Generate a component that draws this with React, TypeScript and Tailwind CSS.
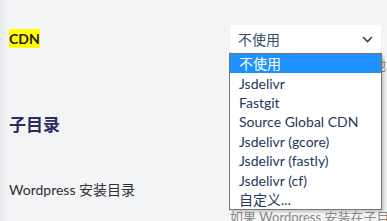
import React from 'react';

const font = { fontFamily: 'Lato, "Noto Sans CJK SC", sans-serif' };

const options = [
  '不使用',
  'Jsdelivr',
  'Fastgit',
  'Source Global CDN',
  'Jsdelivr (gcore)',
  'Jsdelivr (fastly)',
  'Jsdelivr (cf)',
  '自定义...',
];

export default function App() {
  return (
    <div
      className="relative flex w-[387px] h-[221px] overflow-hidden bg-[#f3f4f6]"
      style={font}
    >
      {/* bord gauche */}
      <div className="w-[9px] shrink-0 bg-gradient-to-r from-[#e9ebee] to-[#f3f4f6]" />

      <div className="flex flex-col flex-1">
        {/* CDN */}
        <div className="flex mt-[25px]">
          <div className="w-[221px] shrink-0 flex items-start pt-[4px]">
            <span className="bg-[#ffff00] text-[14px] leading-[19px] font-bold text-[#1b1b1b]">CDN</span>
          </div>
          <div className="w-[151px] flex flex-col">
            <div className="h-[28px] bg-white rounded-[4px] shadow-[0_1px_2px_rgba(0,0,0,0.06)] flex items-center justify-between pl-[8px] pr-[8px]">
              <span className="text-[14px] text-[#34506e]">不使用</span>
              <svg width="11" height="7" viewBox="0 0 11 7" fill="none">
                <path d="M1 1l4.5 4.5L10 1" stroke="#444" strokeWidth="1.6" />
              </svg>
            </div>
            <p className="mt-[4px] text-[13px] leading-[16px] text-[#8a8a8a] whitespace-nowrap">
              选择加载静态资源文件的地址
            </p>
          </div>
        </div>

        {/* Sous-répertoire */}
        <h2 className="mt-[42px] text-[17px] leading-[20px] font-bold text-[#2e2c5c]">子目录</h2>

        <div className="flex mt-[39px]">
          <div className="w-[221px] shrink-0 pt-[3px]">
            <span className="text-[14px] leading-[17px] text-[#2f2f34]">Wordpress 安装目录</span>
          </div>
          <div className="w-[151px] flex flex-col">
            <div className="h-[28px] bg-white rounded-[4px]" />
            <p className="mt-[7px] text-[13px] leading-[16px] text-[#8a8a8a] whitespace-nowrap">
              如果 Wordpress 安装在子目录中
            </p>
          </div>
        </div>
      </div>

      {/* liste déroulante ouverte */}
      <div className="absolute left-[229px] top-[53px] w-[153px] bg-white border border-[#767676] shadow-[2px_2px_3px_rgba(0,0,0,0.2)]">
        {options.map((o, i) => (
          <div
            key={o}
            className={`h-[19.4px] flex items-center pl-[9px] text-[14px] whitespace-nowrap ${
              i === 0 ? 'bg-[#1e90ff] text-white' : 'text-[#22395a]'
            }`}
          >
            {o}
          </div>
        ))}
      </div>
    </div>
  );
}
